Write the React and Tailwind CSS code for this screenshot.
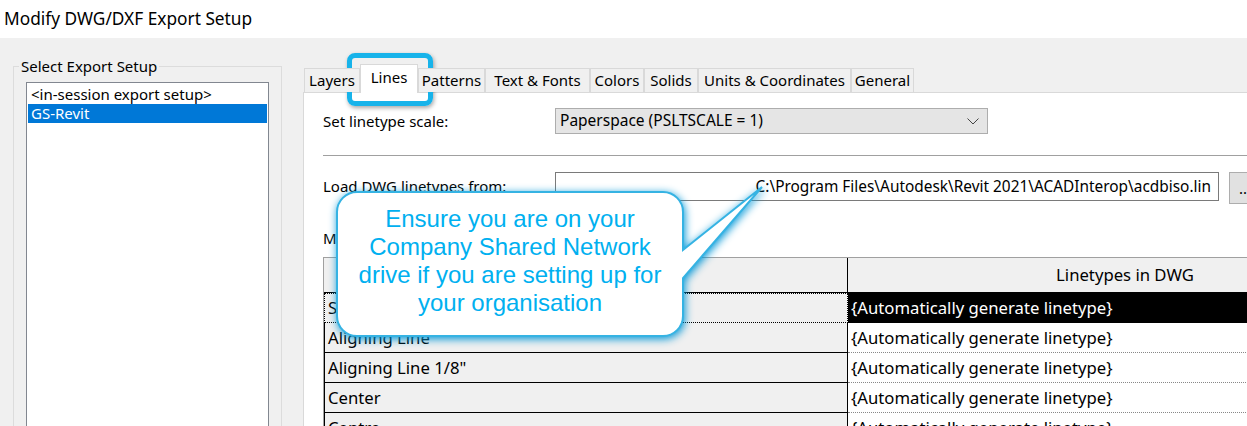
import React from 'react'

const tabs = [
  { label: 'Layers', w: 'w-[56px]' },
  { label: 'Lines', w: 'w-[58px]', active: true },
  { label: 'Patterns', w: 'w-[67px]' },
  { label: 'Text & Fonts', w: 'w-[105px]' },
  { label: 'Colors', w: 'w-[54px]' },
  { label: 'Solids', w: 'w-[54px]' },
  { label: 'Units & Coordinates', w: 'w-[153px]' },
  { label: 'General', w: 'w-[63px]' },
]

const rows = ['Solid', 'Aligning Line', 'Aligning Line 1/8"', 'Center', 'Centre']

function Callout() {
  return (
    <div className="absolute left-[330px] top-[180px] w-[450px] h-[170px] pointer-events-none">
      <svg
        width="450"
        height="170"
        viewBox="0 0 450 170"
        className="absolute inset-0 overflow-visible drop-shadow-[1px_2px_4px_rgba(0,150,215,1)]"
      >
        <path
          d="M 27 12 H 333 A 20 20 0 0 1 353 32 V 70 L 432 7 L 353 98 V 136 A 20 20 0 0 1 333 156 H 27 A 20 20 0 0 1 7 136 V 32 A 20 20 0 0 1 27 12 Z"
          fill="#ffffff"
          stroke="#35b3e3"
          strokeWidth="2"
        />
      </svg>
      <div className="absolute left-[7px] top-[12px] w-[346px] h-[144px] pt-[13px] flex flex-col items-center text-[#00b0f0] text-[24px] leading-[28px] font-['Liberation_Sans',Arial,sans-serif]">
        <span>Ensure you are on your</span>
        <span>Company Shared Network</span>
        <span>drive if you are setting up for</span>
        <span>your organisation</span>
      </div>
    </div>
  )
}

export default function App() {
  return (
    <div className="relative w-[1247px] h-[426px] overflow-hidden bg-white text-black font-['Noto_Sans',sans-serif]">
      {/* title */}
      <div className="h-[38px] flex items-center pl-[4px] text-[17.3px] bg-white">
        Modify DWG/DXF Export Setup
      </div>

      <div className="flex h-[388px] bg-[#f0f0f0]">
        {/* left group */}
        <div className="w-[303px] shrink-0">
          <fieldset className="ml-[13px] mt-[18px] w-[269px] h-[400px] border border-[#dcdcdc] pl-[12px] pr-[12px]">
            <legend className="-ml-[7px] px-[2px] text-[15px] leading-[20px]">Select Export Setup</legend>
            <div className="mt-[6px] h-[380px] border border-[#828790] bg-white p-px text-[15px]">
              <div className="h-[19px] leading-[19px] pl-[3px] mt-px">&lt;in-session export setup&gt;</div>
              <div className="h-[19px] leading-[19px] pl-[3px] bg-[#0078d7] text-white">GS-Revit</div>
            </div>
          </fieldset>
        </div>

        {/* tab control */}
        <div className="flex-1 flex flex-col min-w-0">
          <div className="flex items-end pt-[26px] pl-px relative z-10">
            {tabs.map((t) =>
              t.active ? (
                <div
                  key={t.label}
                  className={`${t.w} h-[29px] -mb-px bg-white border-t border-l border-r border-[#d9d9d9] flex items-center justify-center text-[15px] pb-[3px]`}
                >
                  {t.label}
                </div>
              ) : (
                <div
                  key={t.label}
                  className={`${t.w} h-[24px] bg-[#f0f0f0] border-t border-l border-r border-[#d9d9d9] flex items-center justify-center text-[15px]`}
                >
                  {t.label}
                </div>
              )
            )}
          </div>

          <div className="flex-1 bg-white border-t border-l border-[#d9d9d9] pl-[19px] pt-[15px]">
            <div className="flex items-center h-[26px]">
              <div className="w-[232px] shrink-0 text-[15px]">Set linetype scale:</div>
              <div className="w-[433px] h-[26px] shrink-0 bg-[#e5e5e5] border border-[#adadad] flex items-center justify-between pl-[4px] pr-[8px] text-[15.5px]">
                <span>Paperspace (PSLTSCALE = 1)</span>
                <svg width="12" height="7" viewBox="0 0 12 7" fill="none" stroke="#444" strokeWidth="1">
                  <path d="M0.5 0.5 L6 6 L11.5 0.5" />
                </svg>
              </div>
            </div>

            <div className="mt-[21px] h-px bg-[#a0a0a0] w-[1000px]" />

            <div className="flex items-start mt-[16px] h-[30px]">
              <div className="w-[232px] shrink-0 text-[15px] h-[28px] flex items-center">Load DWG linetypes from:</div>
              <div className="w-[664px] h-[29px] shrink-0 border border-[#7a7a7a] flex items-center justify-end pr-[7px] text-[15.4px] bg-white">
                {'C:\\Program Files\\Autodesk\\Revit 2021\\ACADInterop\\acdbiso.lin'}
              </div>
              <div className="ml-[10px] w-[32px] h-[32px] shrink-0 bg-[#e1e1e1] border border-[#adadad] flex items-center justify-center text-[15px]">
                ...
              </div>
            </div>

            <div className="mt-[26px] h-[20px] flex items-center text-[15px]">Map linetypes in Revit to DWG:</div>

            {/* table */}
            <div className="mt-[9px] w-[1080px] border-t border-l border-[#a0a0a0] text-[16.7px]">
              <div className="flex h-[35px] bg-[#f0f0f0] border-b border-black">
                <div className="w-[524px] shrink-0 border-r border-black flex items-center justify-center">
                  Linetypes in Revit
                </div>
                <div className="w-[554px] shrink-0 flex items-center justify-center">Linetypes in DWG</div>
              </div>
              {rows.map((r, i) => (
                <div key={r} className="flex h-[30px]">
                  <div
                    className={`w-[524px] shrink-0 bg-[#f0f0f0] border-r border-black flex items-center pl-[3px] ${
                      i === 0 ? 'border border-dotted border-black' : 'border-b border-l border-black'
                    }`}
                  >
                    {r}
                  </div>
                  <div
                    className={`w-[554px] shrink-0 flex items-center pl-[3px] ${
                      i === 0 ? 'bg-black text-white' : 'bg-white border-b border-dotted border-[#888]'
                    }`}
                  >
                    {'{Automatically generate linetype}'}
                  </div>
                </div>
              ))}
            </div>
          </div>
        </div>
      </div>

      {/* highlight around the Lines tab */}
      <div className="absolute left-[347px] top-[53px] w-[86px] h-[53px] rounded-[8px] border-[5px] border-[#17b3ea] shadow-[1px_2px_4px_rgba(0,0,0,0.35)]" />

      <Callout />
    </div>
  )
}
